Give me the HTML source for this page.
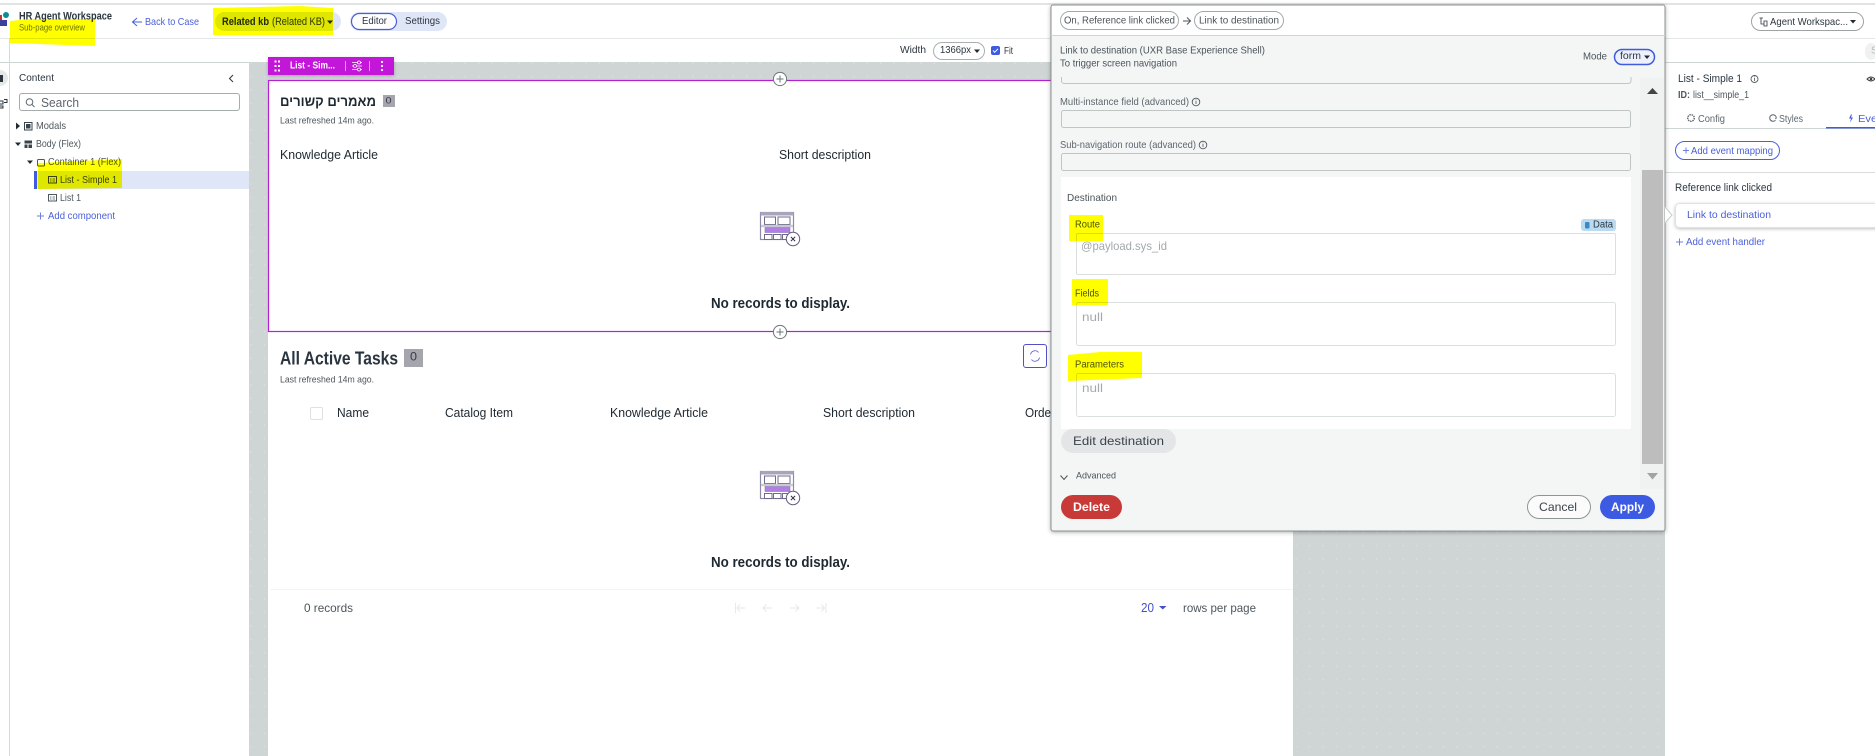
<!DOCTYPE html>
<html><head><meta charset="utf-8"><title>HR Agent Workspace</title>
<style>
html,body{margin:0;padding:0;background:#fff;width:1875px;height:756px;overflow:hidden}
svg{display:block;position:absolute;left:0;top:0;filter:blur(.3px)}
text{font-family:"Liberation Sans","DejaVu Sans",sans-serif;dominant-baseline:central;fill:#2b3640;font-size:11px;white-space:pre}
.y{fill:#ffff00;mix-blend-mode:multiply}
.b{fill:#4a5fd8}
.ln{stroke:#2b3640;stroke-width:1;fill:none}
.g{fill:#5d666c}
</style></head><body>
<svg width="1875" height="756" viewBox="0 0 1875 756" xmlns="http://www.w3.org/2000/svg">
<defs>
<pattern id="dots" x="3" y="3" width="13.4" height="13.4" patternUnits="userSpaceOnUse"><rect width="13.4" height="13.4" fill="#cfd5d5"/><circle cx="6.7" cy="6.7" r="0.8" fill="#dce0e0"/></pattern>
<filter id="sh" x="-3%" y="-3%" width="106%" height="106%"><feDropShadow dx="0" dy="1" stdDeviation="2" flood-color="#000" flood-opacity=".3"/></filter>
<filter id="sh2" x="-5%" y="-30%" width="110%" height="170%"><feDropShadow dx="0" dy="1" stdDeviation="1.5" flood-color="#000" flood-opacity=".25"/></filter>
<g id="empty">
<rect x="760.5" y="212.5" width="33" height="27" fill="#fff" stroke="#8f8ba6" stroke-width="1.2"/>
<rect x="760.5" y="212" width="33" height="3.5" fill="#a9a4bc"/>
<rect x="764.5" y="217" width="11" height="7.5" fill="#fff" stroke="#6f6b8b"/>
<rect x="778" y="217" width="12" height="7.5" fill="#fff" stroke="#6f6b8b"/>
<rect x="761" y="224.8" width="32" height="2.4" fill="#c9c9d2"/>
<rect x="765" y="227.5" width="25" height="5" fill="#b27fe6" stroke="#8b78b5" stroke-width=".6"/>
<rect x="764.5" y="234.5" width="7.5" height="5" fill="#fff" stroke="#6f6b8b"/>
<rect x="773.5" y="234.5" width="7.5" height="5" fill="#fff" stroke="#6f6b8b"/>
<rect x="782.5" y="234.5" width="7.5" height="5" fill="#fff" stroke="#6f6b8b"/>
<circle cx="793" cy="239" r="6.7" fill="#fff" stroke="#5f5b80" stroke-width="1"/>
<path d="M790.9 236.9l4.2 4.2M795.1 236.9l-4.2 4.2" stroke="#33304f" stroke-width="1" fill="none"/>
</g>
<g id="plus"><circle cx="0" cy="0" r="6.6" fill="#fff" stroke="#6c7678" stroke-width="1"/><path d="M-3.5 0H3.5M0 -3.5V3.5" stroke="#6c7678" stroke-width="1"/></g>
</defs>

<!-- base -->
<rect width="1875" height="756" fill="#fff"/>
<rect y="3" width="1875" height="2" fill="#e2e3e3"/>
<rect y="38" width="1875" height="1" fill="#e4e6e6"/>
<rect y="62" width="1875" height="1" fill="#cfd5d5"/>
<rect x="9" y="38" width="1" height="718" fill="#d5dada"/>

<!-- canvas -->
<rect x="249" y="62" width="1420" height="694" fill="url(#dots)"/>
<rect x="268" y="80" width="1025" height="676" fill="#fff"/>

<!-- logo & rail -->
<rect x="0" y="20" width="7" height="6" fill="#3c3f9c"/>
<rect x="0" y="15" width="2" height="5" fill="#c0392b"/>
<circle cx="6" cy="15" r="3" fill="#118a94"/>
<circle cx="0" cy="78" r="8" fill="#e6e8e8"/>
<rect x="0" y="75" width="3" height="7" fill="#2b3640"/>
<path d="M0 101h3v3h-3M4 99.500h3v3h-3M0 106h3v2h-3" class="ln" stroke-width=".8"/>

<!-- header text -->
<text x="19" y="16.500" textLength="93" lengthAdjust="spacingAndGlyphs" style="font-size:11px;font-weight:600;fill:#2a3540">HR Agent Workspace</text>
<text x="19" y="28" textLength="66" lengthAdjust="spacingAndGlyphs" style="font-size:9.500px;fill:#6c7377">Sub-page overview</text>
<path d="M142 22H133M137 18l-4.500 4 4.500 4" stroke="#4a5fd8" stroke-width="1" fill="none"/>
<text class="b" x="145" y="22" textLength="54" lengthAdjust="spacingAndGlyphs" style="font-size:10.500px">Back to Case</text>

<rect x="215" y="12" width="126" height="19" rx="9.500" fill="#dfe6f7"/>
<text x="222" y="22" textLength="47" lengthAdjust="spacingAndGlyphs" style="font-size:11px;font-weight:700;fill:#1f2a33">Related kb</text>
<text x="272" y="22" textLength="53" lengthAdjust="spacingAndGlyphs" style="font-size:11px;fill:#2b3640">(Related KB)</text>
<path d="M327 20.500h6l-3 3.500z" fill="#1f2a33"/>

<rect x="350" y="12" width="97" height="19" rx="9.500" fill="#dfe6f7"/>
<rect x="351.500" y="13.500" width="45" height="16" rx="8" fill="#fff" stroke="#4a5fd8" stroke-width="1.200"/>
<text x="362" y="21" textLength="25" lengthAdjust="spacingAndGlyphs" style="font-size:10.500px">Editor</text>
<text x="405" y="21" textLength="35" lengthAdjust="spacingAndGlyphs" style="font-size:10.500px">Settings</text>

<!-- width -->
<text x="900" y="50" textLength="26" lengthAdjust="spacingAndGlyphs" style="font-size:10.500px">Width</text>
<rect x="933.500" y="42.500" width="51" height="17" rx="8.500" fill="#fff" stroke="#a9afaf"/>
<text x="940" y="50" textLength="31" lengthAdjust="spacingAndGlyphs" style="font-size:10.500px">1366px</text>
<path d="M974 49.500h6l-3 3.500z" fill="#1f2a33"/>
<rect x="991" y="46" width="9" height="9" rx="2" fill="#3f5be0"/>
<path d="M993 50.500l1.700 1.800 3.300-3.500" stroke="#fff" fill="none" stroke-width="1"/>
<text x="1004" y="51" textLength="9" lengthAdjust="spacingAndGlyphs" style="font-size:10.500px">Fit</text>

<!-- content panel -->
<text x="19" y="78" textLength="35" lengthAdjust="spacingAndGlyphs" style="font-size:10.500px">Content</text>
<path d="M233 75l-3.500 3.500 3.500 3.500" stroke="#2b3640" fill="none" stroke-width="1"/>
<rect x="19.500" y="93.500" width="220" height="17" rx="2.500" fill="#fff" stroke="#a6abab"/>
<circle cx="29.500" cy="102" r="3.300" fill="none" stroke="#5d666c"/><path d="M32 104.500l2.500 2.500" stroke="#5d666c"/>
<text x="41" y="103" textLength="38" lengthAdjust="spacingAndGlyphs" style="font-size:12.500px;fill:#5d666c">Search</text>

<rect x="34" y="171" width="215" height="18" fill="#dfe6f7"/>
<rect x="34" y="171" width="3" height="18" fill="#3f5be0"/>

<path d="M16 122.500l4 3.500-4 3.500z" fill="#1f2a33"/>
<rect x="24.500" y="122.500" width="7.500" height="7.500" fill="none" stroke="#3a444c"/><rect x="26" y="124" width="4.500" height="4.500" fill="#3a444c"/>
<text x="36" y="126" textLength="30" lengthAdjust="spacingAndGlyphs" style="font-size:10.500px;fill:#4e575d">Modals</text>
<path d="M15 142.500h6l-3 3.500z" fill="#1f2a33"/>
<rect x="24.500" y="140.500" width="7.500" height="3" fill="#3a444c"/><rect x="24.500" y="144.500" width="3" height="3.500" fill="#3a444c"/><rect x="28.500" y="144.500" width="3.500" height="3.500" fill="#3a444c"/>
<text x="36" y="144" textLength="45" lengthAdjust="spacingAndGlyphs" style="font-size:10.500px;fill:#4e575d">Body (Flex)</text>
<path d="M27 160.500h6l-3 3.500z" fill="#1f2a33"/>
<rect x="37.500" y="159.500" width="7" height="6.500" rx="1" fill="none" stroke="#4e575d"/>
<text x="48" y="162" textLength="73" lengthAdjust="spacingAndGlyphs" style="font-size:10.500px;fill:#4e575d">Container 1 (Flex)</text>
<rect x="48.500" y="176.500" width="8" height="6.500" fill="none" stroke="#3a444c"/><path d="M50 179h1.500M50 181h1.500M52.500 179h2.500M52.500 181h2.500" stroke="#3a444c" stroke-width=".8"/>
<text x="60" y="180" textLength="57" lengthAdjust="spacingAndGlyphs" style="font-size:10.500px;fill:#3a444c">List - Simple 1</text>
<rect x="48.500" y="194.500" width="8" height="6.500" fill="none" stroke="#4e575d"/><path d="M50 197h1.500M50 199h1.500M52.500 197h2.500M52.500 199h2.500" stroke="#4e575d" stroke-width=".8"/>
<text x="60" y="198" textLength="21" lengthAdjust="spacingAndGlyphs" style="font-size:10.500px;fill:#4e575d">List 1</text>
<path d="M37 216h7M40.500 212.500v7" stroke="#6d7fdf" stroke-width="1"/>
<text class="b" x="48" y="216" textLength="67" lengthAdjust="spacingAndGlyphs" style="font-size:10.500px">Add component</text>

<!-- selection -->
<rect x="268.500" y="80.500" width="1030" height="251" fill="none" stroke="#b51fd6" stroke-width="1.200"/>
<rect x="268" y="57" width="126" height="18" fill="#c212d9" filter="url(#sh2)"/>
<g fill="#fff"><rect x="274.500" y="60.500" width="2" height="2"/><rect x="278" y="60.500" width="2" height="2"/><rect x="274.500" y="65" width="2" height="2"/><rect x="278" y="65" width="2" height="2"/><rect x="274.500" y="69.500" width="2" height="2"/><rect x="278" y="69.500" width="2" height="2"/></g>
<text x="290" y="65.500" textLength="45" lengthAdjust="spacingAndGlyphs" style="font-size:10.500px;font-weight:700;fill:#fff">List - Sim...</text>
<rect x="345" y="61" width="1" height="10" fill="#e5a0f0"/><rect x="369" y="61" width="1" height="10" fill="#e5a0f0"/>
<path d="M352 62.500h10M352 66h10M352 69.500h10" stroke="#fff" stroke-width=".8"/><circle cx="359" cy="62.500" r="1.500" fill="#c212d9" stroke="#fff" stroke-width=".8"/><circle cx="355" cy="66" r="1.500" fill="#c212d9" stroke="#fff" stroke-width=".8"/><circle cx="359" cy="69.500" r="1.500" fill="#c212d9" stroke="#fff" stroke-width=".8"/>
<g fill="#fff"><circle cx="382" cy="62" r="1.100"/><circle cx="382" cy="66" r="1.100"/><circle cx="382" cy="70" r="1.100"/></g>
<use href="#plus" x="780" y="79"/>
<use href="#plus" x="780" y="332"/>

<!-- list 1 -->
<text x="280" y="101" textLength="96" lengthAdjust="spacingAndGlyphs" style="font-size:14px;font-weight:700;fill:#1d2830">מאמרים קשורים</text>
<rect x="383" y="95" width="12" height="12" fill="#a5a5ae"/>
<text x="385.500" y="101" textLength="6" lengthAdjust="spacingAndGlyphs" style="font-size:9.500px;fill:#3a3a44">0</text>
<text x="280" y="121" textLength="94" lengthAdjust="spacingAndGlyphs" style="font-size:9.500px;fill:#4d565c">Last refreshed 14m ago.</text>
<text x="280" y="154.500" textLength="98" lengthAdjust="spacingAndGlyphs" style="font-size:13px;fill:#1d2830">Knowledge Article</text>
<text x="779" y="154.500" textLength="92" lengthAdjust="spacingAndGlyphs" style="font-size:13px;fill:#1d2830">Short description</text>
<use href="#empty"/>
<text x="711" y="304" textLength="139" lengthAdjust="spacingAndGlyphs" style="font-size:14.500px;font-weight:700;fill:#1d2830;stroke:none">No records to display.</text>

<!-- list 2 -->
<text x="280" y="358" textLength="118" lengthAdjust="spacingAndGlyphs" style="font-size:18.500px;font-weight:700;fill:#2a3540">All Active Tasks</text>
<rect x="404" y="349" width="19" height="18" fill="#a5a5ae"/>
<text x="410" y="357.500" textLength="7" lengthAdjust="spacingAndGlyphs" style="font-size:11.500px;fill:#3a3a44">0</text>
<text x="280" y="380" textLength="94" lengthAdjust="spacingAndGlyphs" style="font-size:9.500px;fill:#4d565c">Last refreshed 14m ago.</text>
<rect x="1023.500" y="344.500" width="23" height="23" rx="2.500" fill="#fff" stroke="#5050c8"/>
<path d="M1030.500 354.500a4.500 4.500 0 0 1 8-2M1039.500 357.500a4.500 4.500 0 0 1-8 2" stroke="#6a6ad8" fill="none" stroke-width=".9"/>
<rect x="310.500" y="407.500" width="12" height="12" rx="1.500" fill="#fff" stroke="#e0e0e0"/>
<text x="337" y="412.500" textLength="32" lengthAdjust="spacingAndGlyphs" style="font-size:13px;fill:#1d2830">Name</text>
<text x="445" y="412.500" textLength="68" lengthAdjust="spacingAndGlyphs" style="font-size:13px;fill:#1d2830">Catalog Item</text>
<text x="610" y="412.500" textLength="98" lengthAdjust="spacingAndGlyphs" style="font-size:13px;fill:#1d2830">Knowledge Article</text>
<text x="823" y="412.500" textLength="92" lengthAdjust="spacingAndGlyphs" style="font-size:13px;fill:#1d2830">Short description</text>
<text x="1025" y="412.500" textLength="30" lengthAdjust="spacingAndGlyphs" style="font-size:13px;fill:#1d2830">Order</text>
<use href="#empty" y="259"/>
<text x="711" y="563" textLength="139" lengthAdjust="spacingAndGlyphs" style="font-size:14.500px;font-weight:700;fill:#1d2830">No records to display.</text>
<rect x="270" y="589" width="1023" height="1" fill="#f3f3f3"/>
<text x="304" y="608" textLength="49" lengthAdjust="spacingAndGlyphs" style="font-size:12px;fill:#4d565c">0 records</text>
<g stroke="#e6e8ea" fill="none" stroke-width="1"><path d="M735.500 603v10M745 608h-8M740 604.500l-3 3.500 3 3.500"/><path d="M772 608h-9M766.500 604.500l-3.500 3.500 3.500 3.500"/><path d="M790 608h9M795.500 604.500l3.500 3.500-3.500 3.500"/><path d="M816.500 608h8M821.500 604.500l3 3.500-3 3.500M826 603v10"/></g>
<text class="b" x="1141" y="607.500" textLength="13" lengthAdjust="spacingAndGlyphs" style="font-size:13px;fill:#4550c8">20</text>
<path d="M1159 606h7.500l-3.750 3.500z" fill="#4550c8"/>
<text x="1183" y="608" textLength="73" lengthAdjust="spacingAndGlyphs" style="font-size:12px;fill:#4d565c">rows per page</text>

<!-- right panel -->
<rect x="1665" y="5" width="210" height="751" fill="#fff"/>
<rect x="1665" y="38" width="210" height="1" fill="#e4e6e6"/>
<rect x="1665" y="62" width="210" height="1" fill="#cfd5d5"/>
<rect x="1751.500" y="12.500" width="112" height="18" rx="9" fill="#fff" stroke="#9da3a3"/>
<path d="M1759.500 18h3.500M1761 18v6h2.500M1764 21h3v5h-3z" stroke="#2b3640" fill="none" stroke-width=".8"/>
<text x="1770" y="22" textLength="78" lengthAdjust="spacingAndGlyphs" style="font-size:10.500px">Agent Workspac...</text>
<path d="M1850 20h6l-3 3.500z" fill="#1f2a33"/>
<rect x="1865" y="43" width="12" height="17" rx="8" fill="#f0f1f1"/>
<text x="1871" y="51" style="font-size:10px;fill:#b5b8b8">S</text>
<text x="1678" y="79" textLength="64" lengthAdjust="spacingAndGlyphs" style="font-size:11px;fill:#2b3640">List - Simple 1</text>
<circle cx="1754.500" cy="79" r="3.500" fill="none" stroke="#4e575d" stroke-width=".9"/><path d="M1754.500 78v3M1754.500 76.500v.8" stroke="#4e575d" stroke-width=".8"/>
<path d="M1867 79q4-4 8 0q-4 4-8 0z" fill="none" stroke="#3a444c"/><circle cx="1871" cy="79" r="1.300" fill="#3a444c"/>
<text x="1678" y="95" textLength="12" lengthAdjust="spacingAndGlyphs" style="font-size:10.500px;font-weight:700;fill:#4e575d">ID:</text>
<text x="1693" y="95" textLength="56" lengthAdjust="spacingAndGlyphs" style="font-size:10.500px;fill:#4e575d">list__simple_1</text>
<circle cx="1691" cy="118" r="3.300" fill="none" stroke="#5d666c" stroke-dasharray="1.500 .8" stroke-width="1.400"/>
<text x="1698" y="119" textLength="27" lengthAdjust="spacingAndGlyphs" style="font-size:10.500px;fill:#5d666c">Config</text>
<path d="M1773 114.700a3.300 3.300 0 1 0 2.500 5.500" fill="none" stroke="#5d666c"/><path d="M1773 114.700a3.300 3.300 0 0 1 3.300 3.300l-1 .8" fill="none" stroke="#5d666c"/>
<text x="1779" y="119" textLength="24" lengthAdjust="spacingAndGlyphs" style="font-size:10.500px;fill:#5d666c">Styles</text>
<path d="M1851 114.500l-2 4h2l-1 4 3-5h-2l1-3z" fill="#3f5be0"/>
<text class="b" x="1858" y="119" textLength="34" lengthAdjust="spacingAndGlyphs" style="font-size:10.500px">Events</text>
<rect x="1665" y="128" width="210" height="1" fill="#cfd5d5"/>
<rect x="1826" y="127" width="49" height="1.500" fill="#3f5be0"/>
<rect x="1675.500" y="141.500" width="104" height="18" rx="9" fill="#fff" stroke="#4a5fd8"/>
<path d="M1683 150.500h6M1686 147.500v6" stroke="#6d7fdf"/>
<text class="b" x="1691" y="151" textLength="82" lengthAdjust="spacingAndGlyphs" style="font-size:10.500px">Add event mapping</text>
<rect x="1665" y="172" width="210" height="1" fill="#d8dcdc"/>
<text x="1675" y="188" textLength="97" lengthAdjust="spacingAndGlyphs" style="font-size:11px;font-weight:400;fill:#2b3640">Reference link clicked</text>
<rect x="1675.500" y="203.500" width="210" height="24" rx="4" fill="#fff" stroke="#dfe2e2" filter="url(#sh2)"/>
<text class="b" x="1687" y="215" textLength="84" lengthAdjust="spacingAndGlyphs" style="font-size:10.500px">Link to destination</text>
<path d="M1676 242h7M1679.500 238.500v7" stroke="#6d7fdf"/>
<text class="b" x="1686" y="242" textLength="79" lengthAdjust="spacingAndGlyphs" style="font-size:10.500px">Add event handler</text>

<!-- modal -->
<rect x="1051" y="5" width="614" height="526" rx="2" fill="#f4f6f6" stroke="#8a9090" stroke-width="1" filter="url(#sh)"/>
<path d="M1051.500 35V7.500q0-2 2-2H1662.500q2 0 2 2V35z" fill="#fff"/>
<rect x="1051" y="35" width="614" height="1" fill="#cfd5d5"/>
<path d="M1665 207l7 8-7 8" fill="#fff" stroke="#c8cccc"/>
<rect x="1060.500" y="11.500" width="118" height="18" rx="9" fill="#fff" stroke="#a3a9a9"/>
<text x="1064" y="20.500" textLength="111" lengthAdjust="spacingAndGlyphs" style="font-size:10.500px;fill:#4a5359">On, Reference link clicked</text>
<path d="M1183 21h7M1187 17.500l3.500 3.500-3.500 3.500" stroke="#4a5359" fill="none"/>
<rect x="1194.500" y="11.500" width="89" height="18" rx="9" fill="#fff" stroke="#a3a9a9"/>
<text x="1199" y="20.500" textLength="80" lengthAdjust="spacingAndGlyphs" style="font-size:10.500px;fill:#4a5359">Link to destination</text>

<text x="1060" y="50.500" textLength="205" lengthAdjust="spacingAndGlyphs" style="font-size:10.500px;fill:#4a5359">Link to destination (UXR Base Experience Shell)</text>
<text x="1060" y="63.500" textLength="117" lengthAdjust="spacingAndGlyphs" style="font-size:10.500px;fill:#4a5359">To trigger screen navigation</text>
<text x="1583" y="56.500" textLength="24" lengthAdjust="spacingAndGlyphs" style="font-size:10.500px;fill:#4a5359">Mode</text>
<rect x="1614.500" y="49.500" width="40" height="15" rx="7.500" fill="#eef1fb" stroke="#3f5be0" stroke-width="1.500"/>
<text x="1620" y="56" textLength="21" lengthAdjust="spacingAndGlyphs" style="font-size:10.500px;fill:#2b3640">form</text>
<path d="M1644 55.500h6l-3 3.500z" fill="#1f2a33"/>

<path d="M1061.500 77v3.500q0 3 3 3H1628q3 0 3-3V77" fill="none" stroke="#bfc5c5"/>
<text x="1060" y="102" textLength="129" lengthAdjust="spacingAndGlyphs" style="font-size:10.500px;fill:#5d666c">Multi-instance field (advanced)</text>
<circle cx="1196" cy="102" r="3.800" fill="none" stroke="#4e575d" stroke-width=".9"/><path d="M1196 101v3M1196 99.500v.8" stroke="#4e575d" stroke-width=".8"/>
<rect x="1061.500" y="110.500" width="569" height="17" rx="2" fill="#f4f6f6" stroke="#bfc5c5"/>
<text x="1060" y="145" textLength="136" lengthAdjust="spacingAndGlyphs" style="font-size:10.500px;fill:#5d666c">Sub-navigation route (advanced)</text>
<circle cx="1203" cy="145" r="3.800" fill="none" stroke="#4e575d" stroke-width=".9"/><path d="M1203 144v3M1203 142.500v.8" stroke="#4e575d" stroke-width=".8"/>
<rect x="1061.500" y="153.500" width="569" height="17" rx="2" fill="#f4f6f6" stroke="#bfc5c5"/>

<rect x="1061" y="177" width="570" height="252" fill="#fff"/>
<text x="1067" y="198" textLength="50" lengthAdjust="spacingAndGlyphs" style="font-size:10.500px;fill:#4a5359">Destination</text>
<text x="1075" y="225" textLength="25" lengthAdjust="spacingAndGlyphs" style="font-size:10px;fill:#4a5359">Route</text>
<rect x="1581" y="219" width="35" height="12" rx="3" fill="#b9daf0"/>
<rect x="1585" y="222" width="4.500" height="6.500" rx="1" fill="#3b8ac4"/>
<text x="1593" y="225" textLength="20" lengthAdjust="spacingAndGlyphs" style="font-size:10px;fill:#2b3640">Data</text>
<rect x="1076.500" y="233.500" width="539" height="41" rx="1.500" fill="#fff" stroke="#dcdfdf"/>
<text x="1081" y="246" textLength="86" lengthAdjust="spacingAndGlyphs" style="font-size:12px;fill:#a3a8ab">@payload.sys_id</text>
<text x="1075" y="294" textLength="24" lengthAdjust="spacingAndGlyphs" style="font-size:10px;fill:#4a5359">Fields</text>
<rect x="1076.500" y="302.500" width="539" height="43" rx="2" fill="#fff" stroke="#dcdfdf"/>
<text x="1082" y="317" textLength="21" lengthAdjust="spacingAndGlyphs" style="font-size:12px;fill:#a3a8ab">null</text>
<text x="1075" y="365" textLength="49" lengthAdjust="spacingAndGlyphs" style="font-size:10px;fill:#4a5359">Parameters</text>
<rect x="1076.500" y="373.500" width="539" height="43" rx="2" fill="#fff" stroke="#dcdfdf"/>
<text x="1082" y="388" textLength="21" lengthAdjust="spacingAndGlyphs" style="font-size:12px;fill:#a3a8ab">null</text>

<rect x="1061" y="429" width="115" height="24" rx="12" fill="#e4e5e7"/>
<text x="1073" y="441" textLength="91" lengthAdjust="spacingAndGlyphs" style="font-size:12px;fill:#3a444c">Edit destination</text>
<path d="M1060.500 475.500l3.500 4 3.500-4" stroke="#4a5359" fill="none"/>
<text x="1076" y="476" textLength="40" lengthAdjust="spacingAndGlyphs" style="font-size:9.500px;fill:#4a5359">Advanced</text>
<rect x="1061" y="495" width="61" height="24" rx="12" fill="#c83a37"/>
<text x="1073" y="507" textLength="37" lengthAdjust="spacingAndGlyphs" style="font-size:12px;font-weight:700;fill:#fff">Delete</text>
<rect x="1527.500" y="495.500" width="63" height="23" rx="11.500" fill="#fbfbfb" stroke="#8f9595"/>
<text x="1539" y="507" textLength="38" lengthAdjust="spacingAndGlyphs" style="font-size:12px;fill:#3a444c">Cancel</text>
<rect x="1600" y="495" width="55" height="24" rx="12" fill="#3d5ae3"/>
<text x="1611" y="507" textLength="33" lengthAdjust="spacingAndGlyphs" style="font-size:12px;font-weight:700;fill:#fff">Apply</text>

<rect x="1640" y="78" width="24" height="411" fill="#f0f1f1"/>
<rect x="1642" y="170" width="21" height="294" fill="#bdbdbd"/>
<path d="M1647 94h11l-5.500-6z" fill="#444"/>
<path d="M1647 473h11l-5.500 6.500z" fill="#a3a3a3"/>

<!-- highlighter -->
<path class="y" d="M10 21L30 19H95V46L10 43z"/>
<path class="y" d="M213 8L300 6 333 8V35H213z"/>
<path class="y" d="M38 163L122 159V188L38 189z"/>
<rect class="y" x="1069" y="215" width="34" height="26"/>
<rect class="y" x="1072" y="279" width="36" height="26"/>
<path class="y" d="M1068 355L1100 352 1142 352V378L1068 381z"/>
</svg>
</body></html>
